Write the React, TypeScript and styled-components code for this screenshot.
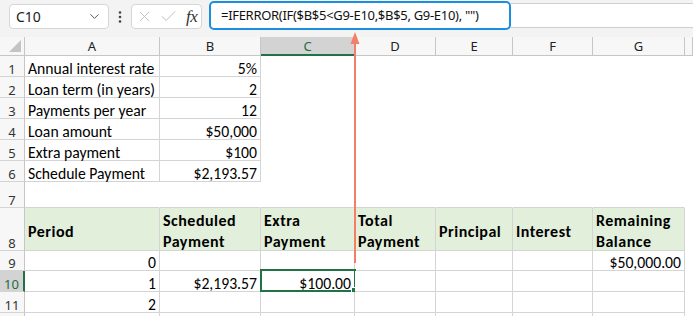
import React from 'react';
import styled, { createGlobalStyle } from 'styled-components';
import { ChevronDown, X, Check } from 'lucide-react';

const Global = createGlobalStyle`
  html, body { margin: 0; padding: 0; background: #ffffff; }
  #root { width: 693px; height: 316px; overflow: hidden; }
`;

const UI_FONT = `"Segoe UI", "Noto Sans", "Open Sans", sans-serif`;
const CELL_FONT = `Calibri, Carlito, "Lato", "Open Sans", sans-serif`;

const Page = styled.div`
  position: relative;
  width: 693px;
  height: 316px;
  overflow: hidden;
  background: #ffffff;
  display: flex;
  flex-direction: column;
`;

const Toolbar = styled.div`
  height: 37px;
  flex: none;
  display: flex;
  align-items: flex-start;
  background: #f3f3f3;
  padding-left: 9px;
  box-sizing: border-box;
`;

const NameBox = styled.div`
  margin-top: 4px;
  width: 100px;
  height: 25px;
  box-sizing: border-box;
  background: #fff;
  border: 1px solid #d6d6d6;
  border-radius: 4px;
  display: flex;
  align-items: center;
  justify-content: space-between;
  padding: 0 6px 0 6px;
  font-family: ${UI_FONT};
  font-size: 14px;
  color: #1a1a1a;
  svg { color: #5a5a5a; }
`;

const Dots = styled.div`
  margin-top: 11px;
  width: 22px;
  display: flex;
  justify-content: center;
`;

const FxBox = styled.div`
  margin-top: 4px;
  width: 71px;
  height: 25px;
  box-sizing: border-box;
  background: #fff;
  border: 1px solid #d6d6d6;
  border-radius: 4px;
  display: flex;
  align-items: center;
  padding: 0 4px 0 4px;
  gap: 6px;
  margin-right: 7px;
  svg { color: #b9b9b9; flex: none; }
`;

const Fx = styled.span`
  font-family: "Liberation Serif", "DejaVu Serif", serif;
  font-style: italic;
  font-size: 17px;
  color: #333;
  margin-left: 2px;
  letter-spacing: -0.5px;
`;

const FormulaBar = styled.div`
  flex: 1;
  display: flex;
  align-items: center;
  height: 35px;
`;

const FormulaEdit = styled.div`
  width: 302px;
  height: 29px;
  margin-top: -5px;
  box-sizing: border-box;
  border: 2px solid #1b8ee0;
  border-radius: 5px;
  background: #fff;
  display: flex;
  align-items: center;
  padding-left: 10px;
  font-family: ${UI_FONT};
  font-size: 13px;
  letter-spacing: -0.3px;
  color: #111;
  white-space: nowrap;
`;

const FormulaRest = styled.div`
  flex: 1;
  height: 25px;
  margin-top: -5px;
  box-sizing: border-box;
  background: #fff;
  border-top: 1px solid #cfcfcf;
  border-bottom: 1px solid #cfcfcf;
`;

const Sheet = styled.div`
  display: grid;
  grid-template-columns: 25px 135px 101px 94px 81px 77px 80px 92px 1fr;
  grid-template-rows: 19px repeat(6, 21px) 26px 43px 20px 21px 21px 21px;
`;

const Corner = styled.div`
  background: #f7f7f7;
  border-right: 1px solid #c6c6c6;
  border-bottom: 1px solid #c6c6c6;
  box-sizing: border-box;
  display: flex;
  align-items: flex-end;
  justify-content: flex-end;
  padding: 0 3px 3px 0;
`;

const Triangle = styled.div`
  width: 0;
  height: 0;
  border-left: 12px solid transparent;
  border-bottom: 12px solid #c4c4c4;
`;

const ColHead = styled.div<{ $sel?: boolean }>`
  box-sizing: border-box;
  background: ${(p) => (p.$sel ? '#d3d3d3' : '#f7f7f7')};
  border-right: 1px solid #c6c6c6;
  border-bottom: ${(p) => (p.$sel ? '2px solid #217346' : '1px solid #c6c6c6')};
  display: flex;
  align-items: center;
  justify-content: center;
  font-family: ${UI_FONT};
  font-size: 13px;
  color: ${(p) => (p.$sel ? '#1d6b41' : '#222')};
  padding-top: ${(p) => (p.$sel ? '1px' : '0')};
`;

const RowHead = styled.div<{ $sel?: boolean }>`
  box-sizing: border-box;
  background: ${(p) => (p.$sel ? '#d3d3d3' : '#f7f7f7')};
  border-right: ${(p) => (p.$sel ? '2px solid #217346' : '1px solid #c6c6c6')};
  border-bottom: 1px solid #d4d4d4;
  display: flex;
  align-items: flex-end;
  justify-content: center;
  font-family: ${UI_FONT};
  font-size: 13px;
  line-height: 14px;
  color: ${(p) => (p.$sel ? '#1d6b41' : '#333')};
  overflow: hidden;
`;

type Grid = 'all' | 'bottom' | 'none';

type CellProps = {
  $right?: boolean;
  $bold?: boolean;
  $fill?: boolean;
  $grid?: Grid;
};

const Cell = styled.div<CellProps>`
  position: relative;
  box-sizing: border-box;
  min-width: 0;
  background: ${(p) => (p.$fill ? '#e2efda' : '#fff')};
  border-right: 1px solid ${(p) => (p.$grid === 'all' ? '#d4d4d4' : 'transparent')};
  border-bottom: 1px solid ${(p) => (p.$grid === 'all' || p.$grid === 'bottom' ? '#d4d4d4' : 'transparent')};
  display: flex;
  align-items: ${(p) => (p.$bold ? 'center' : 'flex-end')};
  justify-content: ${(p) => (p.$right ? 'flex-end' : 'flex-start')};
  padding: ${(p) => (p.$bold ? '4px 3px 0 3px' : '0 3px 0 3px')};
  font-family: ${CELL_FONT};
  font-size: ${(p) => (p.$bold ? '16px' : '15.7px')};
  letter-spacing: ${(p) => (p.$bold ? '0.5px' : '0')};
  font-weight: ${(p) => (p.$bold ? 700 : 400)};
  line-height: ${(p) => (p.$bold ? '21px' : '15px')};
  color: #000;
  white-space: ${(p) => (p.$bold ? 'normal' : 'nowrap')};
`;

const Selection = styled.div`
  position: absolute;
  left: -1px;
  top: -2px;
  right: -2px;
  bottom: -1px;
  border: 2px solid #217346;
  pointer-events: none;
`;

const Handle = styled.div`
  position: absolute;
  right: -4px;
  bottom: -4px;
  width: 5px;
  height: 5px;
  background: #217346;
  border: 1px solid #fff;
`;

const Arrow = styled.svg`
  position: absolute;
  left: 0;
  top: 0;
  pointer-events: none;
`;

const COLS = ['A', 'B', 'C', 'D', 'E', 'F', 'G'];

type CellData = { text?: string; right?: boolean; bold?: boolean; fill?: boolean; grid: Grid; sel?: boolean };
type Row = { n: number; label: string; cells: CellData[] };

const inputs: [string, string][] = [
  ['Annual interest rate', '5%'],
  ['Loan term (in years)', '2'],
  ['Payments per year', '12'],
  ['Loan amount', '$50,000'],
  ['Extra payment', '$100'],
  ['Schedule Payment', '$2,193.57'],
];

const headers = ['Period', 'Scheduled Payment', 'Extra Payment', 'Total Payment', 'Principal', 'Interest', 'Remaining Balance'];

const blank = (n: number, grid: Grid): CellData[] => Array.from({ length: n }, () => ({ grid }));

const rows: Row[] = [
  ...inputs.map(([a, b], i) => ({
    n: i + 1,
    label: String(i + 1),
    cells: [{ text: a, grid: 'all' as Grid }, { text: b, right: true, grid: 'all' as Grid }, ...blank(6, 'none')],
  })),
  { n: 7, label: '7', cells: [...blank(7, 'bottom'), ...blank(1, 'none')] },
  {
    n: 8,
    label: '8',
    cells: [...headers.map((h) => ({ text: h, bold: true, fill: true, grid: 'all' as Grid })), ...blank(1, 'none')],
  },
  {
    n: 9,
    label: '9',
    cells: [
      { text: '0', right: true, grid: 'all' },
      ...blank(5, 'all'),
      { text: '$50,000.00', right: true, grid: 'all' },
      ...blank(1, 'none'),
    ],
  },
  {
    n: 10,
    label: '10',
    cells: [
      { text: '1', right: true, grid: 'all' },
      { text: '$2,193.57', right: true, grid: 'all' },
      { text: '$100.00', right: true, grid: 'all', sel: true },
      ...blank(4, 'all'),
      ...blank(1, 'none'),
    ],
  },
  {
    n: 11,
    label: '11',
    cells: [{ text: '2', right: true, grid: 'all' }, ...blank(6, 'all'), ...blank(1, 'none')],
  },
  { n: 12, label: '', cells: [...blank(7, 'all'), ...blank(1, 'none')] },
];

export default function App() {
  return (
    <Page>
      <Global />
      <Toolbar>
        <NameBox>
          <span>C10</span>
          <ChevronDown size={15} strokeWidth={1.6} />
        </NameBox>
        <Dots>
          <svg width="4" height="12" viewBox="0 0 4 12">
            <circle cx="2" cy="1.5" r="1.3" fill="#444" />
            <circle cx="2" cy="6" r="1.3" fill="#444" />
            <circle cx="2" cy="10.5" r="1.3" fill="#444" />
          </svg>
        </Dots>
        <FxBox>
          <X size={17} strokeWidth={1.2} />
          <Check size={19} strokeWidth={1.2} />
          <Fx>fx</Fx>
        </FxBox>
        <FormulaBar>
          <FormulaEdit>=IFERROR(IF($B$5&lt;G9-E10,$B$5, G9-E10), "")</FormulaEdit>
          <FormulaRest />
        </FormulaBar>
      </Toolbar>
      <Sheet>
        <Corner>
          <Triangle />
        </Corner>
        {COLS.map((c) => (
          <ColHead key={c} $sel={c === 'C'}>
            {c}
          </ColHead>
        ))}
        <ColHead />
        {rows.map((r) => (
          <React.Fragment key={r.n}>
            <RowHead $sel={r.n === 10}>{r.label}</RowHead>
            {r.cells.map((c, i) => (
              <Cell key={i} $right={c.right} $bold={c.bold} $fill={c.fill} $grid={c.grid}>
                {c.text}
                {c.sel && (
                  <Selection>
                    <Handle />
                  </Selection>
                )}
              </Cell>
            ))}
          </React.Fragment>
        ))}
      </Sheet>
      <Arrow width="693" height="316" viewBox="0 0 693 316">
        <line x1="355" y1="263" x2="355" y2="42" stroke="#f47f68" strokeWidth="2" />
        <polygon points="355,32 350.5,44 359.5,44" fill="#f47f68" />
      </Arrow>
    </Page>
  );
}
